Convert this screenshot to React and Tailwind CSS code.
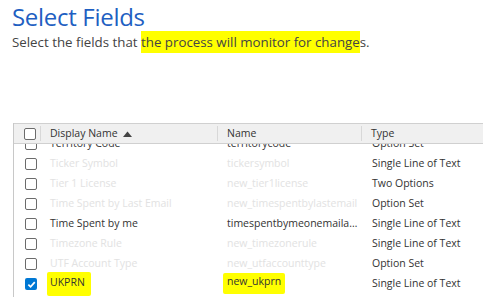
import React from 'react';

const rows = [
  { display: 'Territory Code', name: 'territorycode', type: 'Option Set' },
  { display: 'Ticker Symbol', name: 'tickersymbol', type: 'Single Line of Text', faint: true },
  { display: 'Tier 1 License', name: 'new_tier1license', type: 'Two Options', faint: true },
  { display: 'Time Spent by Last Email', name: 'new_timespentbylastemail', type: 'Option Set', faint: true },
  { display: 'Time Spent by me', name: 'timespentbymeonemailan...', type: 'Single Line of Text' },
  { display: 'Timezone Rule', name: 'new_timezonerule', type: 'Single Line of Text', faint: true },
  { display: 'UTF Account Type', name: 'new_utfaccounttype', type: 'Option Set', faint: true },
  { display: 'UKPRN', name: 'new_ukprn', type: 'Single Line of Text', checked: true },
];

const Box = ({ checked }) =>
  checked ? (
    <span className="w-[12px] h-[12px] rounded-[2px] bg-[#0078d4] flex items-center justify-center">
      <svg width="9" height="9" viewBox="0 0 10 10">
        <path d="M1.5 5.2 L4 7.6 L8.6 2.4" fill="none" stroke="white" strokeWidth="1.9" />
      </svg>
    </span>
  ) : (
    <span className="w-[12px] h-[12px] rounded-[2px] border border-[#6b6b6b] bg-white" />
  );

const Mark = ({ children, className = '' }) => (
  <span className={`bg-[#ffff00] ${className}`}>{children}</span>
);

export default function App() {
  return (
    <div
      className="w-[483px] h-[304px] bg-white overflow-hidden text-[#333]"
      style={{ fontFamily: '"Open Sans", "Noto Sans", sans-serif' }}
    >
      <div className="pl-[12px] pt-[1px]">
        <h1 className="text-[24px] leading-[32px] tracking-[-0.3px] text-[#1f5fc2]">Select Fields</h1>
        <p className="text-[13.3px] leading-[18px] text-[#444]">
          Select the fields that <Mark className="py-[2px]">the process will monitor for change</Mark>s.
        </p>
      </div>

      <div className="mt-[72px] ml-[13px] border-l border-[#c8c8c8] h-[174px] flex flex-col">
        {/* header */}
        <div className="h-[21px] flex items-center bg-[#f0f0f0] border-y border-[#d0d0d0] text-[10.5px] text-[#333] shrink-0">
          <div className="w-[27px] flex justify-end pr-[4px] border-r border-[#d8d8d8] h-[15px] items-center">
            <Box />
          </div>
          <div className="w-[177px] pl-[9px] border-r border-[#d8d8d8] h-[15px] flex items-center gap-[5px]">
            Display Name
            <svg width="9" height="6" viewBox="0 0 9 6">
              <path d="M0 6 L4.5 0.5 L9 6 Z" fill="#444" />
            </svg>
          </div>
          <div className="w-[144px] pl-[9px] border-r border-[#d8d8d8] h-[15px] flex items-center">Name</div>
          <div className="flex-1 pl-[9px] flex items-center">Type</div>
        </div>

        {/* body */}
        <div className="flex-1 overflow-hidden">
          <div className="-mt-[10px]">
            {rows.map((r) => (
              <div key={r.display} className="h-[20px] flex items-center text-[10.5px]">
                <div className="w-[27px] flex justify-end pr-[4px]">
                  <Box checked={r.checked} />
                </div>
                <div className={`w-[177px] pl-[6px] ${r.faint ? 'text-[#e2e2e2]' : ''} ${r.checked ? '' : 'truncate pl-[9px]'}`}>
                  {r.checked ? (
                    <Mark className="inline-block pl-[3px] pr-[6px] pt-[3px] pb-[5px] rounded-[2px]">{r.display}</Mark>
                  ) : (
                    r.display
                  )}
                </div>
                <div className={`w-[144px] pl-[5px] ${r.faint ? 'text-[#e2e2e2]' : ''} ${r.checked ? '' : 'truncate pl-[9px]'}`}>
                  {r.checked ? (
                    <Mark className="inline-block px-[4px] pt-[1px] pb-[4px] -mt-[3px] rounded-[2px]">{r.name}</Mark>
                  ) : (
                    r.name
                  )}
                </div>
                <div className="flex-1 pl-[10px] whitespace-nowrap">{r.type}</div>
              </div>
            ))}
          </div>
        </div>
      </div>
    </div>
  );
}
